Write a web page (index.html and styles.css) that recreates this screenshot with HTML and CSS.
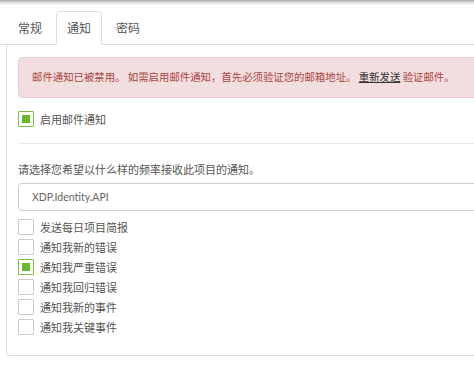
FILE: index.html
```html
<!DOCTYPE html>
<html lang="zh-CN">
<head>
<meta charset="utf-8">
<link rel="stylesheet" href="styles.css">
</head>
<body>
<div class="topshade"></div>
<ul class="tabs">
  <li class="tab">常规</li>
  <li class="tab active">通知</li>
  <li class="tab">密码</li>
</ul>
<div class="panel">
  <div class="alert">邮件通知已被禁用。 如需启用邮件通知，首先必须验证您的邮箱地址。 <a class="alert-link">重新发送</a> 验证邮件。</div>
  <label class="check main"><span class="box on"></span>启用邮件通知</label>
  <hr class="sep">
  <p class="hint">请选择您希望以什么样的频率接收此项目的通知。</p>
  <div class="select">XDP.Identity.API</div>
  <div class="list">
    <label class="check"><span class="box"></span>发送每日项目简报</label>
    <label class="check"><span class="box"></span>通知我新的错误</label>
    <label class="check"><span class="box on"></span>通知我严重错误</label>
    <label class="check"><span class="box"></span>通知我回归错误</label>
    <label class="check"><span class="box"></span>通知我新的事件</label>
    <label class="check"><span class="box"></span>通知我关键事件</label>
  </div>
</div>
</body>
</html>
```
FILE: styles.css
```css
html, body {
  margin: 0;
  padding: 0;
  background: #fff;
  overflow: hidden;
}
body {
  width: 474px;
  height: 366px;
  font-family: "Noto Sans CJK SC", "Noto Sans", sans-serif;
  font-size: 11px;
  color: #555;
}
.topshade {
  height: 5px;
  background: linear-gradient(#a9a9a9, #dcdcdc 50%, #fff);
}
.tabs {
  list-style: none;
  margin: 6px 0 0 0;
  padding: 0 0 0 6px;
  display: flex;
  border-bottom: 1px solid #ddd;
  width: 520px;
}
.tab {
  padding: 0 11px;
  height: 32px;
  line-height: 32px;
  margin-bottom: -1px;
  margin-right: 2px;
  color: #555;
  border: 1px solid transparent;
  border-radius: 4px 4px 0 0;
  font-size: 12px;
}
.tab.active {
  border-color: #ddd;
  border-bottom-color: #fff;
  background: #fff;
  padding: 0 10px;
}
.panel {
  margin-left: 6px;
  width: 520px;
  height: 311px;
  border: 1px solid #ddd;
  border-top: none;
  border-radius: 0 0 4px 4px;
  padding: 12px 11px 0 11px;
  box-sizing: border-box;
}
.alert {
  background: #f2dede;
  border: 1px solid #ebccd1;
  color: #a94442;
  border-radius: 4px;
  padding: 10px 16px 11px 13px;
  line-height: 18px;
  font-size: 10.4px;
  white-space: nowrap;
  margin-right: -40px;
}
.alert-link {
  color: #333;
  text-decoration: underline;
}
.check {
  display: flex;
  align-items: center;
  height: 20px;
  line-height: 20px;
  color: #555;
}
.check.main {
  margin-top: 11px;
}
.box {
  width: 14px;
  height: 14px;
  border: 1px solid #ccc;
  border-radius: 1px;
  margin-right: 6px;
  box-sizing: content-box;
  position: relative;
  background: #fff;
}
.box.on {
  border-color: #7cc04b;
}
.box.on::after {
  content: "";
  position: absolute;
  left: 3px;
  top: 3px;
  width: 8px;
  height: 8px;
  background: #6ab82e;
}
.sep {
  border: 0;
  border-top: 1px solid #e8e8e8;
  margin: 14px 0 0 0;
}
.hint {
  margin: 15px 0 0 0;
  line-height: 20px;
}
.select {
  margin-top: 4px;
  height: 26px;
  line-height: 26px;
  border: 1px solid #ccc;
  border-radius: 4px;
  padding-left: 13px;
  color: #666;
  font-family: "Lato", "Noto Sans", sans-serif;
  font-size: 10.5px;
}
.list {
  margin-top: 6px;
  display: flex;
  flex-direction: column;
}
```
